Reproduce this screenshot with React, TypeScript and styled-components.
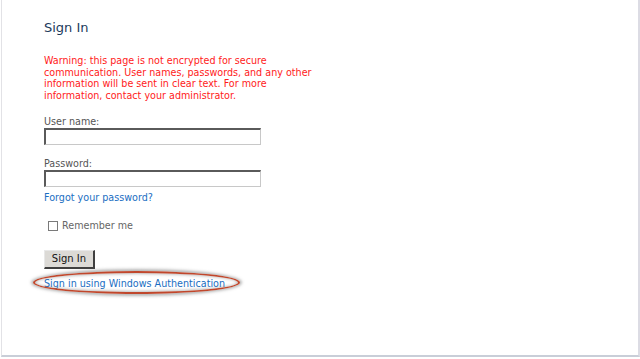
import React from 'react'
import styled, { createGlobalStyle } from 'styled-components'

const GlobalStyle = createGlobalStyle`
  html, body {
    margin: 0;
    padding: 0;
    background: #ffffff;
  }
  body {
    font-family: 'DejaVu Sans', Verdana, sans-serif;
  }
`

const Frame = styled.div`
  box-sizing: border-box;
  width: 639px;
  height: 357px;
  margin-left: 1px;
  border-left: 1px solid #e2e2e6;
  border-right: 2px solid #dcdce4;
  border-bottom: 2px solid #c9ced8;
  background: #ffffff;
`

const Content = styled.div`
  display: flex;
  flex-direction: column;
  padding: 20px 0 0 42px;
  width: 290px;
`

const Title = styled.h1`
  margin: 0;
  font-size: 13px;
  font-weight: normal;
  color: #1b3a5c;
  line-height: 16px;
`

const Warning = styled.p`
  margin: 19px 0 0;
  font-size: 9.6px;
  line-height: 11.7px;
  color: #ff1a1a;
  width: 272px;
`

const Label = styled.label<{ $top: number }>`
  display: block;
  margin-top: ${(p) => p.$top}px;
  font-size: 9.6px;
  line-height: 12px;
  color: #555555;
`

const TextInput = styled.input`
  box-sizing: border-box;
  display: block;
  width: 217px;
  height: 17px;
  margin: 0;
  padding: 0 2px;
  border: 1px solid #c8c8c8;
  border-top: 2px solid #5a5a5a;
  border-left: 2px solid #5a5a5a;
  background: #ffffff;
  outline: none;
`

const Link = styled.a<{ $top: number }>`
  display: block;
  margin-top: ${(p) => p.$top}px;
  font-size: 9.6px;
  line-height: 12px;
  color: #1a6ec2;
  text-decoration: none;
  white-space: nowrap;
`

const CheckRow = styled.label`
  display: flex;
  align-items: center;
  gap: 4px;
  margin: 16px 0 0 4px;
  font-size: 9.6px;
  line-height: 12px;
  color: #666666;
`

const Box = styled.span`
  box-sizing: border-box;
  width: 10px;
  height: 10px;
  border: 1px solid #7a7a7a;
  background: #ffffff;
`

const Button = styled.button`
  align-self: flex-start;
  box-sizing: border-box;
  margin: 18px 0 0 0;
  width: 51px;
  height: 19px;
  padding: 0;
  font-family: 'DejaVu Sans', Verdana, sans-serif;
  font-size: 10px;
  color: #111111;
  background: #dcdad6;
  border: 1px solid #e8e8e8;
  border-right: 2px solid #404040;
  border-bottom: 2px solid #404040;
`

const LinkWrap = styled.div`
  position: relative;
  align-self: flex-start;
  margin-top: 9px;
`

const Ring = styled.span`
  display: block;
  position: absolute;
  left: -11px;
  top: -7px;
  width: 203px;
  height: 19px;
  border: 2px solid #c0472c;
  border-radius: 50%;
  box-shadow: 0 0 3px 2px rgba(110, 110, 110, 0.5), inset 0 0 3px 1px rgba(110, 110, 110, 0.45);
  pointer-events: none;
`

export default function App() {
  return (
    <>
      <GlobalStyle />
      <Frame>
        <Content>
          <Title>Sign In</Title>
          <Warning>
            Warning: this page is not encrypted for secure communication. User names, passwords, and any other
            information will be sent in clear text. For more information, contact your administrator.
          </Warning>
          <Label $top={14}>User name:</Label>
          <TextInput type="text" />
          <Label $top={13}>Password:</Label>
          <TextInput type="password" />
          <Link $top={5} href="#">
            Forgot your password?
          </Link>
          <CheckRow>
            <Box />
            Remember me
          </CheckRow>
          <Button>Sign In</Button>
          <LinkWrap>
            <Link $top={0} href="#">
              Sign in using Windows Authentication
            </Link>
            <Ring />
          </LinkWrap>
        </Content>
      </Frame>
    </>
  )
}
